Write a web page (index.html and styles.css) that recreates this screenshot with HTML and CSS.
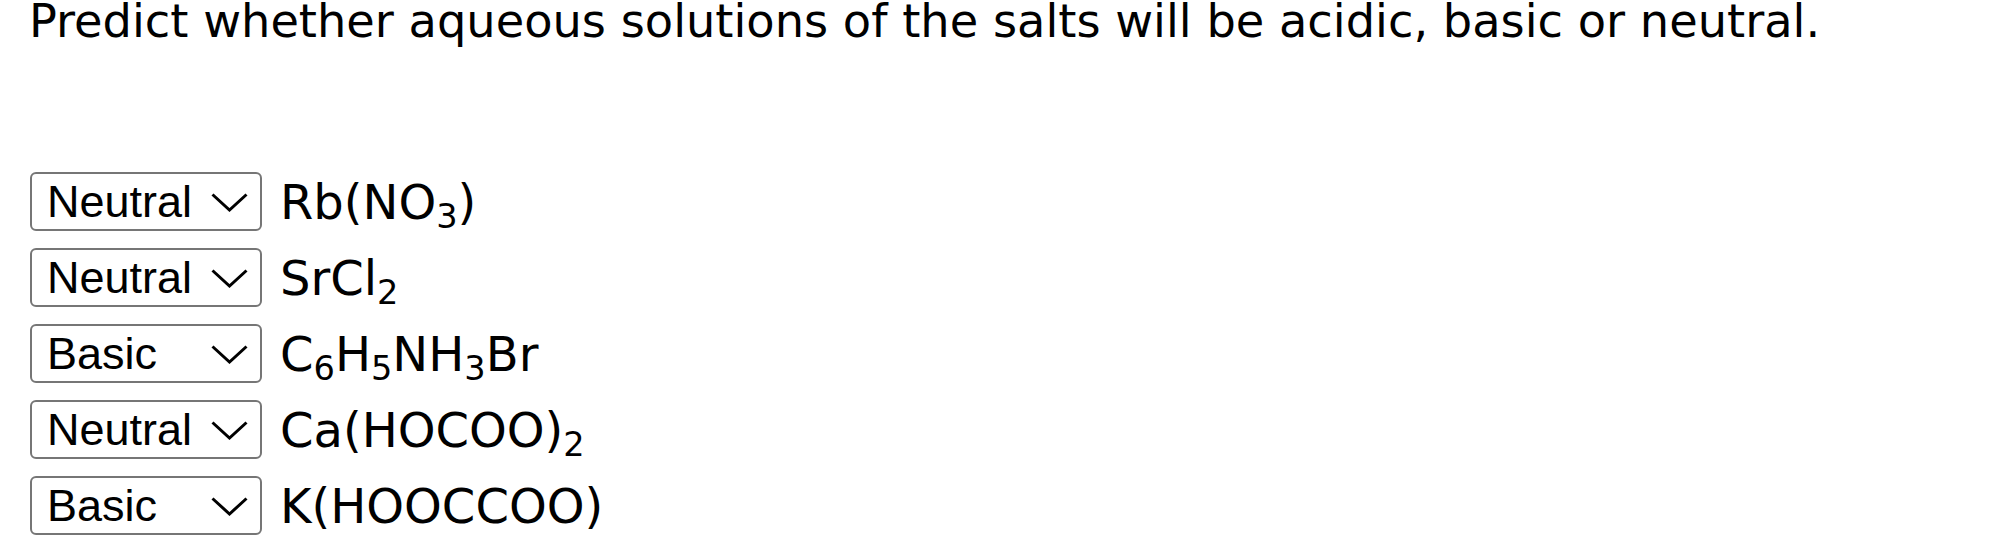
FILE: index.html
```html
<!DOCTYPE html>
<html lang="en">
<head>
<meta charset="utf-8">
<title>Salt solutions</title>
<link rel="stylesheet" href="styles.css">
</head>
<body>
<p class="question">Predict whether aqueous solutions of the salts will be acidic, basic or neutral.</p>
<div class="rows">
  <div class="row">
    <div class="select"><span class="value">Neutral</span><svg class="chev" viewBox="0 0 37 19" width="37" height="19"><path d="M1.5 1.5 L18.5 17 L35.5 1.5" fill="none" stroke="#000" stroke-width="3"/></svg></div>
    <span class="formula">Rb(NO<sub>3</sub>)</span>
  </div>
  <div class="row">
    <div class="select"><span class="value">Neutral</span><svg class="chev" viewBox="0 0 37 19" width="37" height="19"><path d="M1.5 1.5 L18.5 17 L35.5 1.5" fill="none" stroke="#000" stroke-width="3"/></svg></div>
    <span class="formula">SrCl<sub>2</sub></span>
  </div>
  <div class="row">
    <div class="select"><span class="value">Basic</span><svg class="chev" viewBox="0 0 37 19" width="37" height="19"><path d="M1.5 1.5 L18.5 17 L35.5 1.5" fill="none" stroke="#000" stroke-width="3"/></svg></div>
    <span class="formula">C<sub>6</sub>H<sub>5</sub>NH<sub>3</sub>Br</span>
  </div>
  <div class="row">
    <div class="select"><span class="value">Neutral</span><svg class="chev" viewBox="0 0 37 19" width="37" height="19"><path d="M1.5 1.5 L18.5 17 L35.5 1.5" fill="none" stroke="#000" stroke-width="3"/></svg></div>
    <span class="formula">Ca(HOCOO)<sub>2</sub></span>
  </div>
  <div class="row">
    <div class="select"><span class="value">Basic</span><svg class="chev" viewBox="0 0 37 19" width="37" height="19"><path d="M1.5 1.5 L18.5 17 L35.5 1.5" fill="none" stroke="#000" stroke-width="3"/></svg></div>
    <span class="formula">K(HOOCCOO)</span>
  </div>
</div>
</body>
</html>
```

FILE: styles.css
```css
html, body {
  margin: 0;
  padding: 0;
  background: #ffffff;
  color: #000000;
}

body {
  font-family: "DejaVu Sans", Verdana, sans-serif;
}

.question {
  margin: 0 0 130px 0;
  padding-left: 29px;
  font-size: 46.3px;
  line-height: 42px;
  white-space: nowrap;
}

.rows {
  display: flex;
  flex-direction: column;
  gap: 17px;
  padding-left: 30px;
}

.row {
  display: flex;
  align-items: center;
  height: 59px;
}

.select {
  box-sizing: border-box;
  width: 232px;
  height: 59px;
  border: 2px solid #767676;
  border-radius: 6px;
  display: flex;
  align-items: center;
  justify-content: space-between;
  padding: 0 12px 0 15px;
  font-family: "Liberation Sans", Arial, sans-serif;
  font-size: 45px;
  background: #ffffff;
}

.value {
  line-height: 1;
}

.chev {
  display: block;
  margin-top: 1px;
}

.formula {
  margin-left: 18px;
  font-size: 48px;
  line-height: 1;
  white-space: nowrap;
}

.formula sub {
  font-size: 0.7em;
  vertical-align: -9px;
  line-height: 0;
}
```
